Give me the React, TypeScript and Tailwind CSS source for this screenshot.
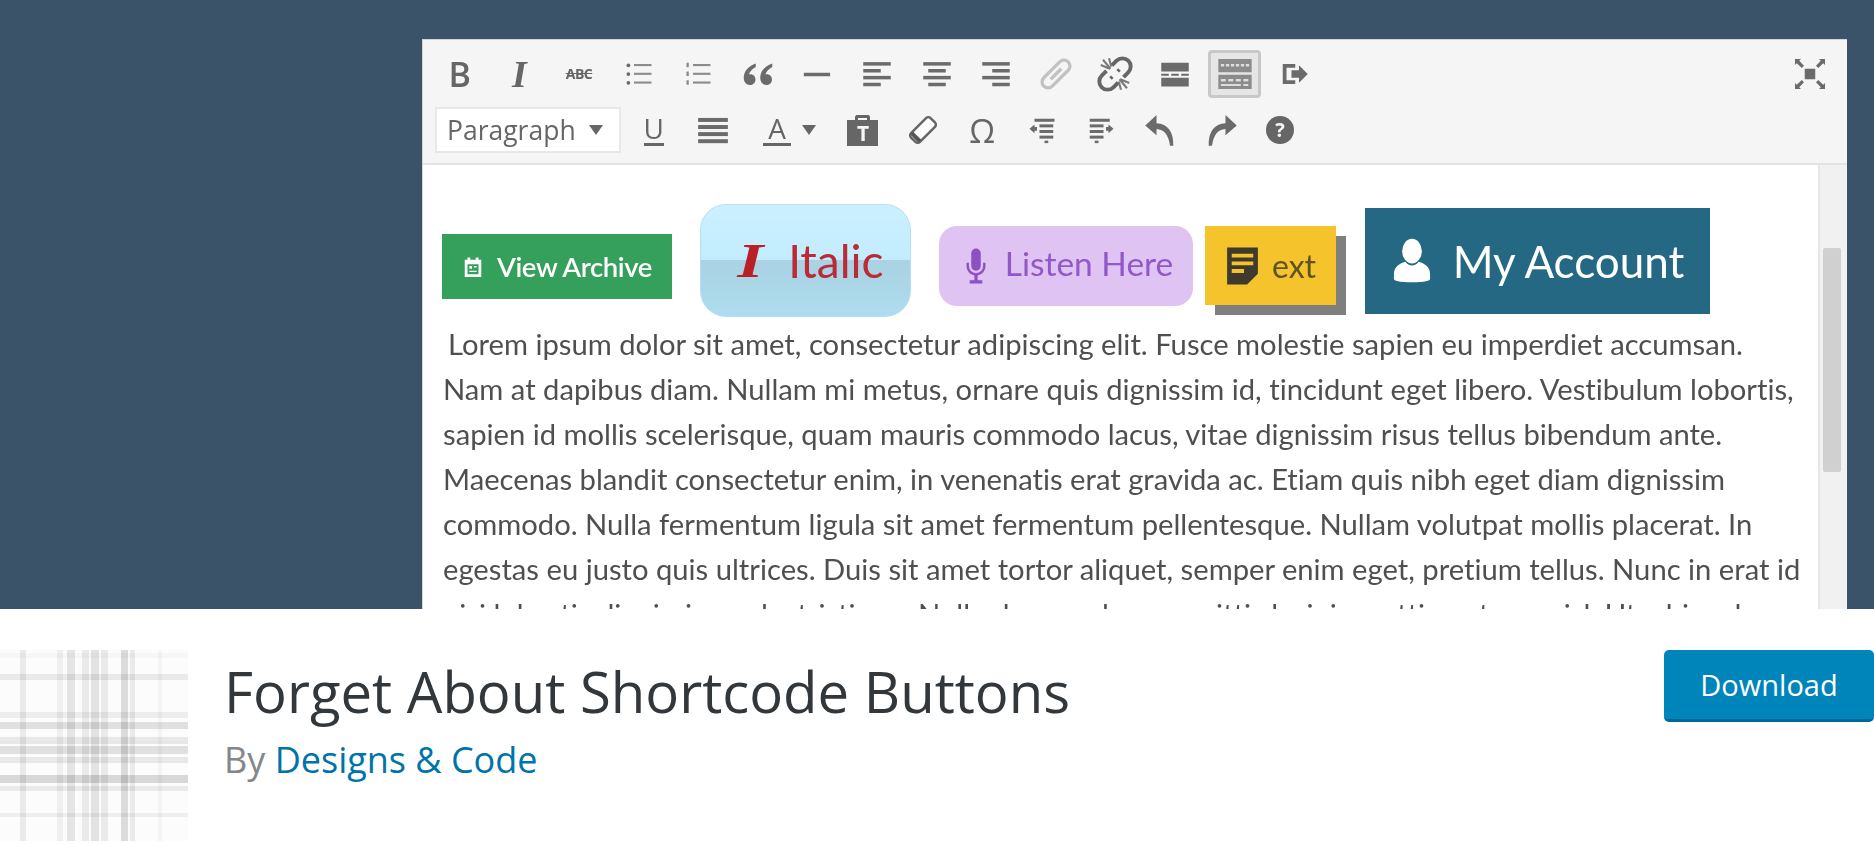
import type { ReactNode } from 'react';

const textLines = [
  'Nam at dapibus diam. Nullam mi metus, ornare quis dignissim id, tincidunt eget libero. Vestibulum lobortis,',
  'sapien id mollis scelerisque, quam mauris commodo lacus, vitae dignissim risus tellus bibendum ante.',
  'Maecenas blandit consectetur enim, in venenatis erat gravida ac. Etiam quis nibh eget diam dignissim',
  'commodo. Nulla fermentum ligula sit amet fermentum pellentesque. Nullam volutpat mollis placerat. In',
  'egestas eu justo quis ultrices. Duis sit amet tortor aliquet, semper enim eget, pretium tellus. Nunc in erat id',
  'nisi lobortis dignissim sed a tristique. Nulla rhoncus lacus sagittis lacinia mattis, rutrum nisl. Ut a hic ad',
];

function Glyph({ children, size = 30 }: { children: ReactNode; size?: number }) {
  return (
    <svg width={size} height={size} viewBox="0 0 24 24" fill="#6b6b6b">
      {children}
    </svg>
  );
}

function Cell({ children }: { children: ReactNode }) {
  return <div className="flex h-12 w-[59.6px] shrink-0 items-center justify-center text-[#666]">{children}</div>;
}

function AlignIcon({ kind }: { kind: 'left' | 'center' | 'right' }) {
  const xs = kind === 'left' ? [1, 1, 1, 1] : kind === 'center' ? [1, 5, 1, 5] : [1, 9, 1, 9];
  const ws = [22, 14, 22, 14];
  return (
    <Glyph>
      {[2.5, 8, 13.5, 19].map((y, i) => (
        <rect key={y} x={xs[i]} y={y} width={ws[i]} height="2.8" />
      ))}
    </Glyph>
  );
}

function ListIcon({ ordered }: { ordered?: boolean }) {
  return (
    <Glyph>
      {[4, 11, 18].map((y) => (
        <g key={y}>
          {ordered ? (
            <rect x="2.8" y={y - 1} width="1.8" height="3.6" fill="#888" />
          ) : (
            <circle cx="3.5" cy={y + 1} r="1.5" />
          )}
          <rect x="8" y={y} width="14" height="1.7" fill="#8c8c8c" />
        </g>
      ))}
    </Glyph>
  );
}

function IndentIcon({ out }: { out?: boolean }) {
  return (
    <Glyph>
      {[3, 7.5, 12, 16.5].map((y, i) => (
        <rect key={y} x={out ? (i === 0 ? 6 : 10) : 3} y={y} width={i === 0 ? 16 : 11} height="2.4" />
      ))}
      <rect x={out ? 14 : 7} y="20.5" width="3" height="2" />
      {out ? <path d="M2 11l4-3.5v2h2v3H6v2z" /> : <path d="M22 11l-4-3.5v2h-2v3h2v2z" />}
    </Glyph>
  );
}

function Toolbar() {
  return (
    <div className="h-[125px] border-b-2 border-[#e4e4e4] bg-[#f5f5f5] pl-[7px] pt-[10px] blur-[0.7px]">
      <div className="flex h-12 items-center">
        <Cell>
          <span className="font-['Open_Sans',sans-serif] text-[34px] font-semibold leading-none">B</span>
        </Cell>
        <Cell>
          <span className="font-['Liberation_Serif',serif] text-[38px] font-bold italic leading-none">I</span>
        </Cell>
        <Cell>
          <span className="font-['Open_Sans',sans-serif] text-[14px] font-bold leading-none tracking-[-0.5px] line-through">ABC</span>
        </Cell>
        <Cell>
          <ListIcon />
        </Cell>
        <Cell>
          <ListIcon ordered />
        </Cell>
        <Cell>
          <Glyph size={36}>
            <path d="M10.5 5C6 6.5 2.5 10 2.5 14.5c0 3 1.7 4.8 4 4.8s3.8-1.6 3.8-3.7-1.4-3.5-3.4-3.5c-.4 0-.7 0-.9.1.5-2 2.3-3.8 4.5-4.9zM21.5 5c-4.5 1.5-8 5-8 9.5 0 3 1.7 4.8 4 4.8s3.8-1.6 3.8-3.7-1.4-3.5-3.4-3.5c-.4 0-.7 0-.9.1.5-2 2.3-3.8 4.5-4.9z" />
          </Glyph>
        </Cell>
        <Cell>
          <Glyph>
            <rect x="1.5" y="11" width="21" height="2.8" />
          </Glyph>
        </Cell>
        <Cell>
          <AlignIcon kind="left" />
        </Cell>
        <Cell>
          <AlignIcon kind="center" />
        </Cell>
        <Cell>
          <AlignIcon kind="right" />
        </Cell>
        <Cell>
          <svg width="36" height="36" viewBox="0 0 24 24" fill="none" stroke="#c2c2c2" strokeWidth="2.2">
            <rect x="0.5" y="8" width="23" height="8" rx="4" transform="rotate(-45 12 12)" />
            <path d="M8.5 15.5l7-7" />
          </svg>
        </Cell>
        <Cell>
          <svg width="36" height="36" viewBox="0 0 24 24" fill="none" stroke="#666" strokeWidth="2.6">
            <rect x="-0.5" y="6.500" width="25" height="11" rx="5.500" transform="rotate(-45 12 12)" />
            <path d="M9 15l6-6" strokeWidth="2.4" />
            <path d="M3 3l18 18" stroke="#f5f5f5" strokeWidth="5" />
            <path d="M4 2.500l5 6M2.500 6l6 2.500M8 1.500l1.500 5.500M20 21.500l-5-6M21.500 18l-6-2.500M16 22.500L14.500 17" stroke="#7a7a7a" strokeWidth="1.4" />
          </svg>
        </Cell>
        <Cell>
          <Glyph>
            <rect x="1" y="3" width="22" height="7" />
            <rect x="1" y="15" width="22" height="7" />
            <rect x="1" y="11.8" width="6" height="1.6" />
            <rect x="9" y="11.8" width="6" height="1.6" />
            <rect x="17" y="11.8" width="6" height="1.6" />
          </Glyph>
        </Cell>
        <Cell>
          <div className="flex h-12 w-[53px] items-center justify-center rounded-[4px] border-[3px] border-[#c8c8c8] bg-[#e6e6e6]">
            <svg width="40" height="40" viewBox="0 0 24 24" fill="#8b8b8b">
              <path d="M2 3h20v8H2zM2 12.5h20V21H2z" />
              <g fill="#ddd">
                <rect x="3.5" y="6" width="2" height="1.5" />
                <rect x="6.5" y="6" width="2" height="1.5" />
                <rect x="9.5" y="6" width="2" height="1.5" />
                <rect x="12.5" y="6" width="2" height="1.5" />
                <rect x="15.5" y="6" width="2" height="1.5" />
                <rect x="18.5" y="6" width="2" height="1.5" />
                <rect x="3.5" y="15" width="3" height="1.5" />
                <rect x="8" y="15" width="3" height="1.5" />
                <rect x="12.5" y="15" width="3" height="1.5" />
                <rect x="17" y="15" width="3" height="1.5" />
                <rect x="3.5" y="18" width="12" height="1.2" />
                <rect x="17" y="18" width="3" height="1.2" />
              </g>
            </svg>
          </div>
        </Cell>
        <Cell>
          <Glyph>
            <path d="M3 4h10v3H6v10h7v3H3z" />
            <path d="M10 9h6V5l7 7-7 7v-4h-6z" />
          </Glyph>
        </Cell>
        <div className="ml-auto mr-[19px] flex items-center justify-center">
          <svg width="36" height="36" viewBox="0 0 24 24" fill="#6b6b6b">
            <rect x="8.5" y="8.5" width="7" height="7" />
            <path d="M2 2h4L4.8 3.2 8 6.5 6.5 8 3.2 4.800 2 6zM22 2v4l-1.200-1.200L17.500 8 16 6.500l3.200-3.300L18 2zM2 22v-4l1.200 1.200L6.500 16 8 17.500l-3.200 3.300L6 22zM22 22h-4l1.200-1.200L16 17.500l1.500-1.500 3.300 3.200L22 18z" />
          </svg>
        </div>
      </div>
      <div className="mt-[9px] flex h-[46px] items-center">
        <div className="ml-[5px] mr-[3px] flex h-[46px] w-[186px] shrink-0 items-center gap-[13px] border-2 border-[#e8e8e8] bg-white pl-[10px] font-['Open_Sans',sans-serif] text-[26.5px] leading-none text-[#666]">
          Paragraph
          <span className="h-0 w-0 border-x-[7px] border-t-[10px] border-x-transparent border-t-[#666]" />
        </div>
        <Cell>
          <span className="border-b-[3px] border-[#666] pb-[2px] font-['Open_Sans',sans-serif] text-[28px] font-medium leading-[26px]">U</span>
        </Cell>
        <Cell>
          <Glyph size={34}>
            {[3.5, 8.5, 13.5, 18.5].map((y) => (
              <rect key={y} x="1.5" y={y} width="21" height="2.8" />
            ))}
          </Glyph>
        </Cell>
        <div className="flex h-12 w-[90px] shrink-0 items-center text-[#666]">
          <span className="ml-[20px] border-b-[3px] border-[#666] px-[5px] pb-[2px] font-['Open_Sans',sans-serif] text-[28px] font-medium leading-[26px]">A</span>
          <span className="ml-[11px] h-0 w-0 border-x-[7px] border-t-[10px] border-x-transparent border-t-[#666]" />
        </div>
        <Cell>
          <div className="relative mt-[5px] h-[26px] w-[31px] bg-[#666]">
            <span className="absolute left-[8px] top-[-5px] h-[5px] w-[15px] rounded-t-[3px] border-x-[3px] border-t-[3px] border-[#666]" />
            <span className="absolute left-0 top-[3px] w-full text-center font-['Open_Sans',sans-serif] text-[21px] font-bold leading-[21px] text-[#f5f5f5]">T</span>
          </div>
        </Cell>
        <Cell>
          <svg width="30" height="30" viewBox="0 0 24 24">
            <rect x="1" y="7" width="22" height="10" rx="2.5" fill="#fff" stroke="#666" strokeWidth="2" transform="rotate(-45 12 12)" />
            <path d="M3 14.500l6.500 6.500" stroke="#555" strokeWidth="3.200" fill="none" />
          </svg>
        </Cell>
        <Cell>
          <span className="font-['Open_Sans',sans-serif] text-[33px] leading-none">Ω</span>
        </Cell>
        <Cell>
          <IndentIcon out />
        </Cell>
        <Cell>
          <IndentIcon />
        </Cell>
        <Cell>
          <Glyph size={36}>
            <path d="M9 2L1.500 9 9 15.500V11.300c5 .4 8 3.600 9 11.200h2.200c.3-9-3.600-14.700-11.200-15z" />
          </Glyph>
        </Cell>
        <Cell>
          <Glyph size={36}>
            <path d="M15 2l7.500 7L15 15.500V11.300c-5 .4-8 3.600-9 11.200H3.800c-.3-9 3.600-14.700 11.200-15z" />
          </Glyph>
        </Cell>
        <Cell>
          <span className="flex h-7 w-7 items-center justify-center rounded-full bg-[#666] font-['Open_Sans',sans-serif] text-[20px] font-bold leading-none text-[#f5f5f5]">?</span>
        </Cell>
      </div>
    </div>
  );
}

function ButtonRow() {
  return (
    <div className="flex h-[113px] items-start font-['Lato',sans-serif]">
      <div className="mt-[30px] flex h-[65px] w-[230px] shrink-0 items-center justify-center gap-[13px] bg-[#34a05c] text-[27.5px] font-semibold text-white">
        <svg width="22" height="24" viewBox="0 0 24 24" fill="#fff">
          <path d="M3 4h3V1.500h3V4h6V1.500h3V4h3v19H3zM6 9v11h12V9zM8 11h3v3H8zM13 11h3v1.500h-3zM8 16h8v1.500H8z" />
        </svg>
        <span className="tracking-[-0.4px]">View Archive</span>
      </div>
      <div className="ml-[28px] flex h-[113px] w-[211px] shrink-0 items-center justify-center gap-[28px] rounded-[26px] border border-[#b5e0f2] bg-[linear-gradient(180deg,#ccf0ff_0%,#c2ecfd_50%,#a9d2e3_50%,#aedcee_100%)] pl-[14px] text-[46px] text-[#bb2a35]">
        <span className="scale-x-[1.4] font-['Liberation_Serif',serif] text-[48px] font-bold italic leading-none text-[#b92025]">I</span>
        <span className="leading-none">Italic</span>
      </div>
      <div className="ml-[28px] mt-[22px] flex h-[80px] w-[254px] shrink-0 items-center justify-center gap-[16px] rounded-[18px] bg-[#dfc3f3] pl-[4px] text-[33.5px] text-[#9058c8]">
        <svg width="26" height="38" viewBox="0 0 16 24" fill="#8c4fc4">
          <rect x="5" y="1" width="6" height="14" rx="3" />
          <path d="M2 10h1.500v2a4.500 4.500 0 009 0v-2H14v2a6 6 0 01-5 6v3h3v2H4v-2h3v-3a6 6 0 01-5-6z" />
        </svg>
        <span className="mt-[-5px]">Listen Here</span>
      </div>
      <div className="ml-[12px] mt-[22px] flex h-[79px] w-[131px] shrink-0 items-center justify-center gap-[12px] bg-[#f5c32c] text-[32px] text-[#5f5320] shadow-[10px_10px_0_#7f7f7f]">
        <svg width="35" height="40" viewBox="0 0 22 26" fill="#3f3a2e">
          <path d="M1 1h20v17l-7 7H1zM4 5v2.500h14V5zM4 10v2.500h14V10zM4 15v2.500h8V15zM14 24v-5h6z" />
        </svg>
        ext
      </div>
      <div className="ml-[29px] mt-[4px] flex h-[106px] w-[345px] shrink-0 items-center justify-center gap-[20px] bg-[#256884] text-[44px] text-white">
        <svg width="42" height="46" viewBox="0 0 24 28" fill="#fff">
          <ellipse cx="12" cy="8" rx="6" ry="7.500" />
          <path d="M8 14.500c1 1.500 2.500 2.300 4 2.300s3-.8 4-2.300c4 1 7 3.500 7 7.500v3c0 1-3 2-11 2S1 26 1 25v-3c0-4 3-6.500 7-7.500z" />
        </svg>
        My Account
      </div>
    </div>
  );
}

export default function App() {
  return (
    <div className="h-[844px] w-[1874px] overflow-hidden bg-white">
      <div className="h-[609px] overflow-hidden bg-[#3a5369] pl-[422px] pt-[39px]">
        <div className="w-[1425px] border-l border-t border-[#cfd6dc] bg-white">
          <Toolbar />
          <div className="flex">
            <div className="min-w-0 flex-1 pl-[19px] pt-[39px] blur-[0.7px]">
              <ButtonRow />
              <div className="ml-px mt-[4px] whitespace-nowrap font-['Lato',sans-serif] text-[29.2px] leading-[45px] text-[#4f4f4f] [font-variant-ligatures:none]">
                <div className="pl-[5px]">Lorem ipsum dolor sit amet, consectetur adipiscing elit. Fusce molestie sapien eu imperdiet accumsan.</div>
                {textLines.map((line) => (
                  <div key={line}>{line}</div>
                ))}
              </div>
            </div>
            <div className="h-[700px] w-[29px] shrink-0 border-l-2 border-[#e6e6e6] bg-[#f1f1f1] pl-[3px] pt-[83px]">
              <div className="h-[224px] w-[18px] rounded-[2px] bg-[#d0d0d0]" />
            </div>
          </div>
        </div>
      </div>
      <div className="flex items-start pt-[41px]">
        <svg width="188" height="191" viewBox="0 0 188 191" className="shrink-0 blur-[0.5px]">
          <rect width="188" height="191" fill="#fcfcfc" />
          <g fill="#000">
            <rect x="20" width="6" height="191" opacity="0.07" />
            <rect x="57" width="6" height="191" opacity="0.05" />
            <rect x="67" width="8" height="191" opacity="0.09" />
            <rect x="82" width="7" height="191" opacity="0.07" />
            <rect x="91" width="8" height="191" opacity="0.1" />
            <rect x="101" width="7" height="191" opacity="0.07" />
            <rect x="121" width="7" height="191" opacity="0.13" />
            <rect x="130" width="5" height="191" opacity="0.07" />
            <rect x="158" width="4" height="191" opacity="0.03" />
            <rect y="3" width="188" height="5" opacity="0.02" />
            <rect y="24" width="188" height="6" opacity="0.07" />
            <rect y="62" width="188" height="6" opacity="0.06" />
            <rect y="72" width="188" height="7" opacity="0.11" />
            <rect y="87" width="188" height="7" opacity="0.08" />
            <rect y="96" width="188" height="8" opacity="0.11" />
            <rect y="107" width="188" height="6" opacity="0.08" />
            <rect y="125" width="188" height="8" opacity="0.14" />
            <rect y="136" width="188" height="5" opacity="0.07" />
            <rect y="163" width="188" height="4" opacity="0.05" />
          </g>
        </svg>
        <div className="ml-[36px] mt-[9px] font-['Open_Sans',sans-serif]">
          <h1 className="text-[56.3px] font-normal leading-[64px] text-[#32373c]">Forget About Shortcode Buttons</h1>
          <p className="mt-[15px] text-[36px] leading-[44px] text-[#82878c]">
            By <a className="text-[#0073aa]">Designs &amp; Code</a>
          </p>
        </div>
        <a className="ml-auto flex h-[72px] w-[210px] shrink-0 items-center justify-center rounded-[5px] border-b-[3px] border-[#006799] bg-[#0085ba] font-['Open_Sans',sans-serif] text-[29px] text-white">
          Download
        </a>
      </div>
    </div>
  );
}
